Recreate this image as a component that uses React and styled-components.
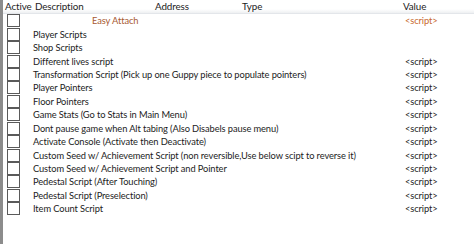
import React from "react";
import styled, { createGlobalStyle } from "styled-components";

const GlobalStyle = createGlobalStyle`
  html, body {
    margin: 0;
    padding: 0;
    background: #ffffff;
  }
  body {
    font-family: Lato, "Open Sans", sans-serif;
    font-size: 9.3px;
    letter-spacing: -0.1px;
    color: #1c1c1c;
  }
`;

const rows = [
  { desc: "Easy Attach", value: "<script>", header: true },
  { desc: "Player Scripts" },
  { desc: "Shop Scripts" },
  { desc: "Different lives script", value: "<script>" },
  { desc: "Transformation Script (Pick up one Guppy piece to populate pointers)", value: "<script>" },
  { desc: "Player Pointers", value: "<script>" },
  { desc: "Floor Pointers", value: "<script>" },
  { desc: "Game Stats (Go to Stats in Main Menu)", value: "<script>" },
  { desc: "Dont pause game when Alt tabing (Also Disabels pause menu)", value: "<script>" },
  { desc: "Activate Console (Activate then Deactivate)", value: "<script>" },
  { desc: "Custom Seed w/ Achievement Script (non reversible,Use below scipt to reverse it)", value: "<script>" },
  { desc: "Custom Seed w/ Achievement Script and Pointer", value: "<script>" },
  { desc: "Pedestal Script (After Touching)", value: "<script>" },
  { desc: "Pedestal Script (Preselection)", value: "<script>" },
  { desc: "Item Count Script", value: "<script>" },
];

const App = () => {
  return (
    <>
      <GlobalStyle />
      <Frame>
        <HeaderRow>
          <HeadCell>Active</HeadCell>
          <HeadCell>Description</HeadCell>
          <HeadCell>Address</HeadCell>
          <HeadCell>Type</HeadCell>
          <HeadCell>Value</HeadCell>
        </HeaderRow>
        {rows.map((r, i) => (
          <Row key={i}>
            <CheckCell>
              <Box />
            </CheckCell>
            <Desc header={r.header}>{r.desc}</Desc>
            <Value header={r.header}>{r.value}</Value>
          </Row>
        ))}
      </Frame>
    </>
  );
};

const Frame = styled.div`
  height: 244px;
  border-left: 3px solid #8c8c8c;
  box-sizing: border-box;
  overflow: hidden;
`;

const HeaderRow = styled.div`
  display: grid;
  grid-template-columns: 30px 120px 87px 161px 1fr;
  height: 14px;
  align-items: center;
  background: linear-gradient(#ffffff 0%, #ffffff 70%, #eef0f2 100%);
  border-bottom: 1px solid #e3e6ea;
  box-sizing: border-box;
`;

const HeadCell = styled.div`
  padding-left: 2px;
  white-space: nowrap;
  line-height: 13px;
  font-size: 9.8px;
`;

const Row = styled.div`
  display: grid;
  grid-template-columns: 30px 372px 1fr;
  height: 13.45px;
  align-items: center;
`;

const CheckCell = styled.div`
  display: flex;
  align-items: center;
  padding-left: 4px;
`;

const Box = styled.div`
  width: 11px;
  height: 11px;
  border: 1px solid #5a5a5a;
  background: #fff;
`;

const Desc = styled.div`
  white-space: nowrap;
  line-height: 13px;
  padding-left: ${(p) => (p.header ? "59px" : "0")};
  color: ${(p) => (p.header ? "#a85a32" : "inherit")};
`;

const Value = styled.div`
  white-space: nowrap;
  line-height: 13px;
  color: ${(p) => (p.header ? "#c8682e" : "inherit")};
`;

export default App;
